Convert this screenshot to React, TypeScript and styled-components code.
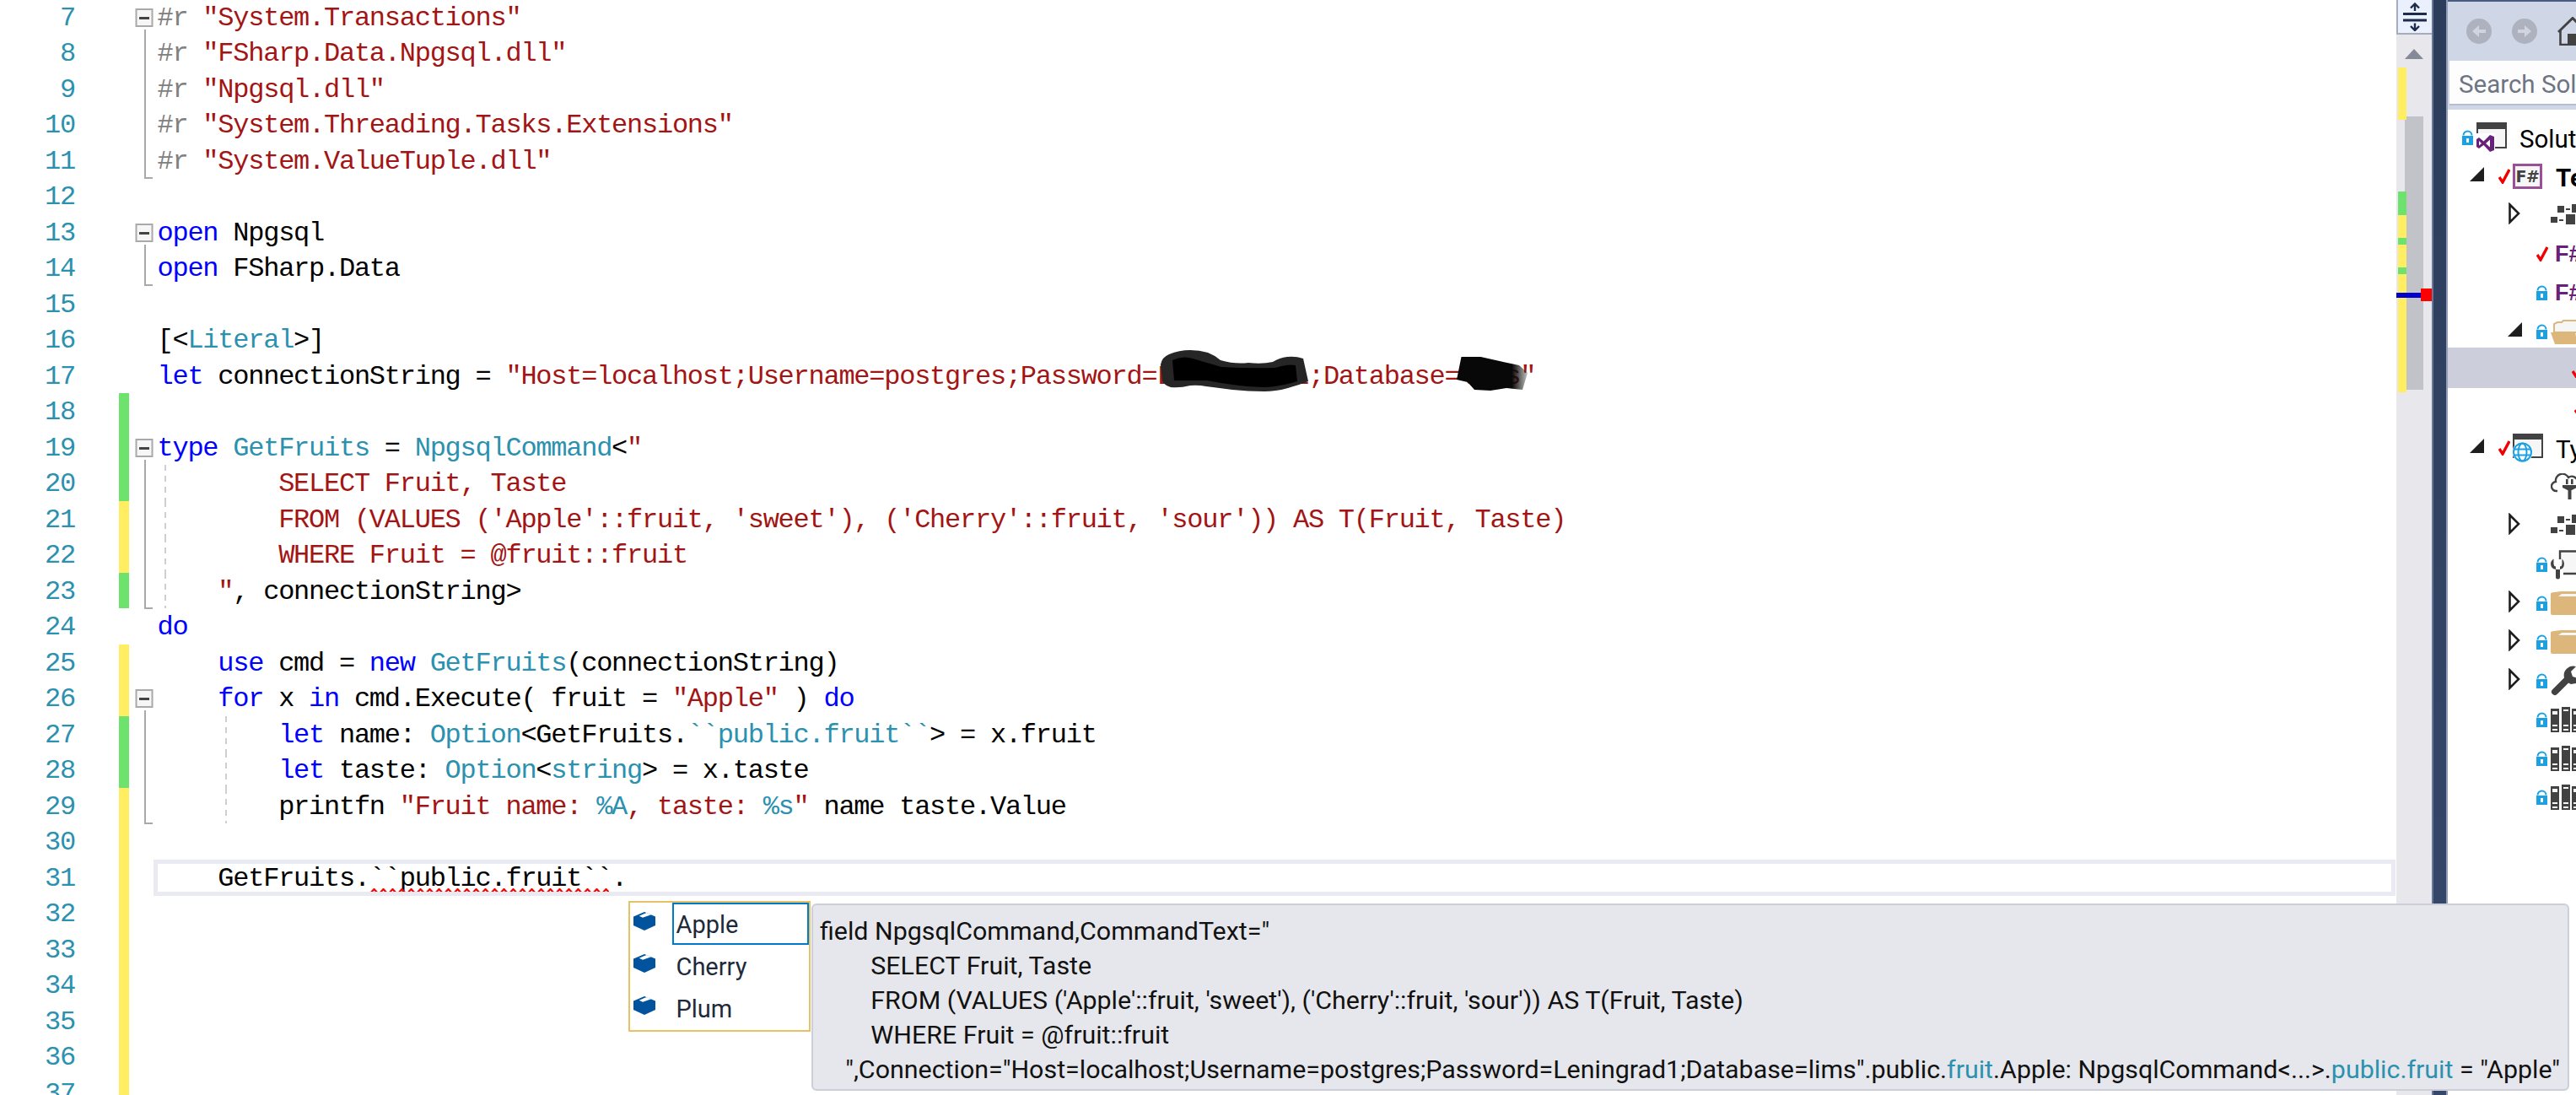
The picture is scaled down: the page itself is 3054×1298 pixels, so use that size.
import React from 'react';
import styled, { createGlobalStyle } from 'styled-components';

const GlobalStyle = createGlobalStyle`
  html, body {
    margin: 0;
    padding: 0;
    background: #fff;
  }
`;

const UI_FONT = `Roboto, "Noto Sans", sans-serif`;
const CODE_FONT = `"Liberation Mono", monospace`;

const Screen = styled.div`
  width: 3054px;
  height: 1298px;
  display: flex;
  overflow: hidden;
  position: relative;
  background: #fff;
`;

const Editor = styled.div`
  width: 2841px;
  flex-shrink: 0;
  position: relative;
  overflow: hidden;
`;

const Lines = styled.div`
  margin-top: -1.25px;
`;

const Row = styled.div<{ $current?: boolean }>`
  height: 42.5px;
  display: flex;
  position: relative;
  font: 32px/46px ${CODE_FONT};
  letter-spacing: -1.25px;
  white-space: pre;

  ${p => p.$current && `
    &::after {
      content: '';
      position: absolute;
      left: 182px;
      top: 0;
      width: 2658px;
      height: 43px;
      box-sizing: border-box;
      border: 5px solid #eaeaf2;
      pointer-events: none;
    }
  `}
`;

const LineNumber = styled.div`
  width: 89px;
  margin-right: 52px;
  text-align: right;
  color: #2b91af;
`;

const ChangeBar = styled.div<{ $kind?: 'g' | 'y' }>`
  width: 12px;
  flex-shrink: 0;
  background: ${p => (p.$kind === 'g' ? '#6de26c' : p.$kind === 'y' ? '#ffee62' : 'transparent')};
`;

const FoldCell = styled.div`
  width: 33.5px;
  flex-shrink: 0;
  height: 42.5px;

  svg {
    display: block;
    overflow: visible;
  }
`;

const Code = styled.div<{ $guide?: number }>`
  position: relative;
  flex: 1;

  ${p => p.$guide !== undefined && `
    &::before {
      content: '';
      position: absolute;
      left: ${p.$guide + 1.5}px;
      top: 0;
      bottom: 0;
      width: 2px;
      background: repeating-linear-gradient(#cfcfcf 0 7px, transparent 7px 13px);
    }
  `}
`;

const tokenColors: Record<string, string> = {
  k: '#0000ff',
  s: '#a31515',
  t: '#2b91af',
  p: '#808080',
  x: '#000000',
};

const Token = styled.span<{ $kind: string }>`
  color: ${p => tokenColors[p.$kind]};
`;

const Squiggle = styled.span`
  position: relative;

  svg {
    position: absolute;
    left: 0;
    bottom: -1.5px;
    width: 284px;
    height: 8px;
  }
`;

const Scribble = styled.svg<{ $left: number; $top: number }>`
  position: absolute;
  left: ${p => p.$left}px;
  top: ${p => p.$top}px;
  overflow: visible;
`;

const CompletionList = styled.div`
  position: absolute;
  left: 745px;
  top: 1068px;
  width: 216px;
  height: 155px;
  box-sizing: border-box;
  border: 2.5px solid #e5c365;
  background: #fff;
  font: 29px ${UI_FONT};
  color: #1e2a3a;
`;

const CompletionItem = styled.div`
  height: 50px;
  display: flex;
  align-items: center;
  padding-left: 3.5px;

  svg {
    flex-shrink: 0;
    margin: -6px 20px 0 0;
  }
`;

const CompletionLabel = styled.div<{ $active?: boolean }>`
  flex: 1;
  height: 100%;
  box-sizing: border-box;
  border: 2px solid ${p => (p.$active ? '#007acc' : 'transparent')};
  padding-left: 3px;
  line-height: 48px;
`;

const QuickInfo = styled.div`
  position: absolute;
  left: 962px;
  top: 1071px;
  width: 2084px;
  height: 222px;
  box-sizing: border-box;
  padding: 10px 0 0 8px;
  background: #e6e7ec;
  border: 2px solid #cccedb;
  border-radius: 6px;
  font: 30.4px/41px ${UI_FONT};
  color: #111;
  white-space: pre;
`;

const QuickType = styled.span`
  color: #2b91af;
`;

const ScrollBar = styled.div`
  width: 42px;
  flex-shrink: 0;
  background: #e8e8ec;
  position: relative;
`;

const SplitButton = styled.div`
  height: 41px;
  box-sizing: border-box;
  background: #eaf0fd;
  border-left: 2px solid #a4adbd;
  border-bottom: 2px solid #a4adbd;
  display: flex;
  align-items: center;
  justify-content: center;
`;

const ScrollArrow = styled.div`
  width: 0;
  height: 0;
  margin: 17px 0 0 10px;
  border-left: 11px solid transparent;
  border-right: 11px solid transparent;
  border-bottom: 12px solid #868999;
`;

const Thumb = styled.div`
  position: absolute;
  left: 10px;
  top: 138px;
  width: 22px;
  height: 324px;
  background: #c2c3c9;
`;

const OverviewMark = styled.div<{ $kind: 'g' | 'y'; $top: number; $height: number }>`
  position: absolute;
  left: 2px;
  width: 10px;
  top: ${p => p.$top}px;
  height: ${p => p.$height}px;
  background: ${p => (p.$kind === 'g' ? '#6de26c' : '#ffee62')};
`;

const CaretLine = styled.div`
  position: absolute;
  left: 0;
  top: 347px;
  width: 30px;
  height: 6px;
  background: #0000cd;
`;

const ErrorMark = styled.div`
  position: absolute;
  left: 29px;
  top: 342px;
  width: 13px;
  height: 15px;
  background: #ff0000;
`;

const Splitter = styled.div`
  width: 19px;
  flex-shrink: 0;
  box-sizing: border-box;
  background: linear-gradient(#2c3c5b, #36496b);
  border-left: 2px solid #67779a;
  border-right: 2px solid #919cb8;
`;

const SolutionPanel = styled.div`
  flex: 1;
  min-width: 0;
  overflow: hidden;
  display: flex;
  flex-direction: column;
  font-family: ${UI_FONT};
`;

const PanelHeader = styled.div`
  height: 130px;
  box-sizing: border-box;
  background: #cfd6e5;
  border-top: 2px solid #4a5b80;
  flex-shrink: 0;
`;

const ToolRow = styled.div`
  height: 70px;
  display: flex;
  align-items: center;
  gap: 24px;
  padding-left: 22px;

  svg {
    flex-shrink: 0;
  }
`;

const SearchBox = styled.div`
  height: 53px;
  box-sizing: border-box;
  margin-left: 2px;
  padding-left: 11px;
  background: #fdfdfd;
  border-bottom: 2px solid #b6bed1;
  font-size: 29.5px;
  line-height: 56px;
  color: #6d7484;
  white-space: nowrap;
`;

const Tree = styled.div`
  padding-top: 10px;
`;

const TreeRow = styled.div<{ $selected?: boolean }>`
  height: ${p => (p.$selected ? 48 : 46)}px;
  box-sizing: border-box;
  display: flex;
  align-items: center;
  white-space: nowrap;
  ${p => p.$selected && `
    margin: -4px 0 2px;
    padding-top: 6px;
    background: #cccedb;
  `}
`;

const Indent = styled.div<{ $level: number }>`
  width: ${p => 15 + p.$level * 45}px;
  flex-shrink: 0;
  display: flex;
  justify-content: flex-end;
  padding-right: 17px;
  box-sizing: border-box;
  margin-top: -5px;
`;

const StateSlot = styled.div`
  width: 17px;
  flex-shrink: 0;
  display: flex;

  svg {
    display: block;
  }
`;

const IconSlot = styled.div`
  width: 51px;
  flex-shrink: 0;
  display: flex;

  svg {
    display: block;
    flex-shrink: 0;
  }
`;

const FsBox = styled.div`
  width: 35px;
  height: 30px;
  box-sizing: border-box;
  border: 3px solid #9b4f96;
  background: #f6f6f6;
  font: bold 19px/24px "DejaVu Sans", sans-serif;
  color: #424242;
  text-align: center;
  letter-spacing: -0.5px;
`;

const FsFile = styled.div`
  padding-left: 5px;
  font: bold 27px/30px "Liberation Sans", sans-serif;
  color: #68217a;
`;

const NodeLabel = styled.div<{ $bold?: boolean }>`
  margin-top: 3px;
  font-size: 29.5px;
  font-weight: ${p => (p.$bold ? 700 : 400)};
  color: #000;
`;

type Tok = [string, string];
interface Line {
  n: number;
  change?: 'g' | 'y';
  fold?: 'open' | 'line' | 'end';
  guide?: number;
  tokens?: Tok[];
}

const codeLines: Line[] = [
  { n: 7, fold: 'open', tokens: [['p', '#r '], ['s', '"System.Transactions"']] },
  { n: 8, fold: 'line', tokens: [['p', '#r '], ['s', '"FSharp.Data.Npgsql.dll"']] },
  { n: 9, fold: 'line', tokens: [['p', '#r '], ['s', '"Npgsql.dll"']] },
  { n: 10, fold: 'line', tokens: [['p', '#r '], ['s', '"System.Threading.Tasks.Extensions"']] },
  { n: 11, fold: 'end', tokens: [['p', '#r '], ['s', '"System.ValueTuple.dll"']] },
  { n: 12 },
  { n: 13, fold: 'open', tokens: [['k', 'open'], ['x', ' Npgsql']] },
  { n: 14, fold: 'end', tokens: [['k', 'open'], ['x', ' FSharp.Data']] },
  { n: 15 },
  { n: 16, tokens: [['x', '[<'], ['t', 'Literal'], ['x', '>]']] },
  { n: 17, tokens: [['k', 'let'], ['x', ' connectionString = '], ['s', '"Host=localhost;Username=postgres;Password=Leningrad1;Database=lims"']] },
  { n: 18, change: 'g' },
  { n: 19, change: 'g', fold: 'open', tokens: [['k', 'type'], ['x', ' '], ['t', 'GetFruits'], ['x', ' = '], ['t', 'NpgsqlCommand'], ['x', '<'], ['s', '"']] },
  { n: 20, change: 'g', fold: 'line', guide: 7, tokens: [['s', '        SELECT Fruit, Taste']] },
  { n: 21, change: 'y', fold: 'line', guide: 7, tokens: [['s', `        FROM (VALUES ('Apple'::fruit, 'sweet'), ('Cherry'::fruit, 'sour')) AS T(Fruit, Taste)`]] },
  { n: 22, change: 'y', fold: 'line', guide: 7, tokens: [['s', '        WHERE Fruit = @fruit::fruit']] },
  { n: 23, change: 'g', fold: 'end', guide: 7, tokens: [['s', '    "'], ['x', ', connectionString>']] },
  { n: 24, tokens: [['k', 'do']] },
  { n: 25, change: 'y', tokens: [['x', '    '], ['k', 'use'], ['x', ' cmd = '], ['k', 'new'], ['x', ' '], ['t', 'GetFruits'], ['x', '(connectionString)']] },
  { n: 26, change: 'y', fold: 'open', tokens: [['x', '    '], ['k', 'for'], ['x', ' x '], ['k', 'in'], ['x', ' cmd.Execute( fruit = '], ['s', '"Apple"'], ['x', ' ) '], ['k', 'do']] },
  { n: 27, change: 'g', fold: 'line', guide: 79, tokens: [['x', '        '], ['k', 'let'], ['x', ' name: '], ['t', 'Option'], ['x', '<GetFruits.'], ['t', '``public.fruit``'], ['x', '> = x.fruit']] },
  { n: 28, change: 'g', fold: 'line', guide: 79, tokens: [['x', '        '], ['k', 'let'], ['x', ' taste: '], ['t', 'Option'], ['x', '<'], ['t', 'string'], ['x', '> = x.taste']] },
  { n: 29, change: 'y', fold: 'end', guide: 79, tokens: [['x', '        printfn '], ['s', '"Fruit name: '], ['t', '%A'], ['s', ', taste: '], ['t', '%s'], ['s', '"'], ['x', ' name taste.Value']] },
  { n: 30, change: 'y' },
  { n: 31, change: 'y' },
  { n: 32, change: 'y' },
  { n: 33, change: 'y' },
  { n: 34, change: 'y' },
  { n: 35, change: 'y' },
  { n: 36, change: 'y' },
  { n: 37, change: 'y' },
];

const overviewMarks: { kind: 'g' | 'y'; top: number; height: number }[] = [
  { kind: 'y', top: 80, height: 62 },
  { kind: 'g', top: 227, height: 28 },
  { kind: 'y', top: 255, height: 27 },
  { kind: 'g', top: 282, height: 8 },
  { kind: 'y', top: 290, height: 27 },
  { kind: 'g', top: 317, height: 8 },
  { kind: 'y', top: 325, height: 140 },
];

const FoldGlyph = ({ kind }: { kind: 'open' | 'line' | 'end' }) => (
  <svg width="35" height="43" viewBox="0 0 35 43">
    {kind === 'open' && (
      <>
        <rect x="8.5" y="12" width="19" height="20" fill="#f6f6f6" stroke="#a9a9a9" strokeWidth="2" />
        <rect x="12" y="21" width="12" height="3" fill="#444" />
        <path d="M19 36V43" stroke="#a9a9a9" strokeWidth="2" fill="none" />
      </>
    )}
    {kind === 'line' && <path d="M19 0V43" stroke="#a9a9a9" strokeWidth="2" fill="none" />}
    {kind === 'end' && <path d="M19 0V42H28" stroke="#a9a9a9" strokeWidth="2" fill="none" />}
  </svg>
);

const CubeIcon = () => (
  <svg width="26" height="22" viewBox="0 0 26 22">
    <polygon points="13,0 26,5.5 26,16 13,22 0,16 0,5.5" fill="#00539c" />
    <polygon points="11,6.7 21,3.3 15.6,0.9 6.7,4.7" fill="#fff" />
  </svg>
);

const Lock = () => (
  <svg width="13" height="18" viewBox="0 0 13 18">
    <path d="M1.5 6.5A5 5 0 0 1 11.5 6.5" fill="none" stroke="#1ba1e2" strokeWidth="2" />
    <path d="M0 7H13V18H0Z M5 10V15H8V10Z" fill="#1ba1e2" fillRule="evenodd" />
  </svg>
);

const Check = () => (
  <svg width="14" height="18" viewBox="0 0 14 18">
    <path d="M1 10L5 16L13 1" fill="none" stroke="#f00000" strokeWidth="3.4" />
  </svg>
);

const SolidArrow = () => (
  <svg width="17" height="17" viewBox="0 0 17 17">
    <polygon points="17,0 17,17 0,17" fill="#1e1e1e" />
  </svg>
);

const HollowArrow = () => (
  <svg width="14" height="26" viewBox="0 0 14 26" style={{ marginRight: 2 }}>
    <path d="M1.5 2.5L12 13L1.5 23.5Z" fill="#fff" stroke="#1e1e1e" strokeWidth="2.6" />
  </svg>
);

const CircleButton = ({ flip }: { flip?: boolean }) => (
  <svg width="30" height="30" viewBox="0 0 30 30">
    <circle cx="15" cy="15" r="15" fill="#adb2be" />
    <path
      d={flip ? 'M7 13H15V8L23 15L15 22V17H7Z' : 'M23 13H15V8L7 15L15 22V17H23Z'}
      fill="#cfd4e0"
    />
  </svg>
);

const HomeIcon = () => (
  <svg width="36" height="34" viewBox="0 0 36 34">
    <path d="M1 18L18 1.5L35 18" fill="none" stroke="#424242" strokeWidth="3" />
    <path d="M3.5 16V33H34V16" fill="none" stroke="#424242" strokeWidth="2.6" />
    <rect x="12" y="20" width="11" height="13" fill="#424242" />
  </svg>
);

const SolutionIcon = () => (
  <svg width="36" height="36" viewBox="0 0 36 36">
    <rect x="1" y="1" width="34" height="29" fill="#f6f6f6" stroke="#424242" strokeWidth="2" />
    <rect x="0" y="0" width="36" height="8" fill="#424242" />
    <rect x="-1" y="13" width="23" height="22" fill="#fff" />
    <path
      d="M0 20L3 18L8.5 22.5L16 15L21 17V33L16 35L8.5 27L3 31L0 29Z M3 22V27.5L6 25ZM16 20.5L11 25L16 29.5Z"
      fill="#68217a"
      fillRule="evenodd"
    />
  </svg>
);

const WebIcon = () => (
  <svg width="36" height="34" viewBox="0 0 36 34">
    <rect x="1" y="1" width="34" height="27" fill="#f6f6f6" stroke="#424242" strokeWidth="2" />
    <rect x="0" y="0" width="36" height="7" fill="#424242" />
    <circle cx="11.5" cy="22" r="12" fill="#fff" />
    <g fill="none" stroke="#1ba1e2" strokeWidth="2">
      <circle cx="11.5" cy="22" r="10.5" />
      <ellipse cx="11.5" cy="22" rx="5" ry="10.5" />
      <path d="M1.5 18.5H21.5M1.5 25.5H21.5" />
    </g>
  </svg>
);

const ReferencesIcon = () => (
  <svg width="36" height="26" viewBox="0 0 36 26" fill="#424242">
    <rect x="8" y="2" width="8" height="8" />
    <rect x="18" y="5" width="5" height="2" />
    <rect x="25" y="0" width="10" height="10" />
    <rect x="0" y="15" width="8" height="7" />
    <rect x="10" y="18" width="5" height="2" />
    <rect x="18" y="12" width="11" height="12" />
  </svg>
);

const CloudPlugIcon = () => (
  <svg width="36" height="32" viewBox="0 0 36 32">
    <path
      d="M8 21H7A5.5 5.5 0 0 1 6 10A8 8 0 0 1 21 5A7 7 0 0 1 32 11"
      fill="none"
      stroke="#424242"
      strokeWidth="2.4"
    />
    <g fill="#424242">
      <rect x="18" y="7" width="2.6" height="6" />
      <rect x="24" y="7" width="2.6" height="6" />
      <path d="M14 14H31V17L25 20H20L14 17Z" />
      <rect x="20.5" y="19" width="4" height="12" />
    </g>
  </svg>
);

const WrenchDocIcon = () => (
  <svg width="36" height="37" viewBox="0 0 36 37">
    <path d="M11 12V2.5H34V29H15" fill="#f6f6f6" stroke="#424242" strokeWidth="2.4" />
    <path
      d="M3.5 11.5V17.5Q3.5 20 6 20.5V33A2.5 2.5 0 0 0 11 33V20.5Q13.5 20 13.5 17.5V11.5Q16 14 16 17Q16 23 11 24V24H6V24Q0 23 0 17Q0 14 3.5 11.5Z"
      fill="#424242"
    />
  </svg>
);

const FolderIcon = () => (
  <svg width="40" height="28" viewBox="0 0 40 28">
    <path d="M0 8L0 3Q0 2 1 1.5L12 0H40V28H2Q0 28 0 26Z" fill="#dcb67a" />
    <path d="M13 3H40V6H9Z" fill="#f6f6f6" />
  </svg>
);

const OpenFolderIcon = () => (
  <svg width="40" height="29" viewBox="0 0 40 29">
    <path d="M4 15V5L8 3H13L15 1H40V15Z" fill="#f6f6f6" stroke="#dcb67a" strokeWidth="2" />
    <path d="M0 15H29L32 29H5Z" fill="#dcb67a" />
  </svg>
);

const WrenchIcon = () => (
  <svg width="36" height="36" viewBox="0 0 36 36">
    <path d="M5 31L19 17" stroke="#424242" strokeWidth="8" strokeLinecap="round" />
    <path d="M16 14A11 11 0 0 1 30 1L24 7L26 13L32 15L36 10V20L24 22L20 20Z" fill="#424242" />
  </svg>
);

const LibraryIcon = () => (
  <svg width="36" height="30" viewBox="0 0 36 30">
    {[
      { x: 0, y: 2, h: 28 },
      { x: 13, y: 0, h: 30 },
      { x: 25, y: 2, h: 28 },
    ].map(b => (
      <g key={b.x}>
        <rect x={b.x} y={b.y} width="10" height={b.h} fill="#424242" />
        <rect x={b.x + 2} y={b.y + 3} width="6" height={b.x === 13 ? 2 : 4} fill="#f6f6f6" />
        <rect x={b.x + 2} y={b.y + b.h - 9} width="6" height="2" fill="#f6f6f6" />
        <rect x={b.x + 2} y={b.y + b.h - 4} width="6" height="2" fill="#f6f6f6" />
      </g>
    ))}
  </svg>
);

interface TreeNode {
  level: number;
  arrow?: 'solid' | 'hollow';
  state?: 'lock' | 'check';
  icon?: React.ReactNode;
  label?: string;
  bold?: boolean;
  selected?: boolean;
}

const treeNodes: TreeNode[] = [
  { level: 0, state: 'lock', icon: <SolutionIcon />, label: 'Solution' },
  { level: 1, arrow: 'solid', state: 'check', icon: <FsBox>F#</FsBox>, label: 'Test', bold: true },
  { level: 2, arrow: 'hollow', icon: <ReferencesIcon /> },
  { level: 2, state: 'check', icon: <FsFile>F#</FsFile> },
  { level: 2, state: 'lock', icon: <FsFile>F#</FsFile> },
  { level: 2, arrow: 'solid', state: 'lock', icon: <OpenFolderIcon /> },
  { level: 2.93, state: 'check', selected: true },
  { level: 3, state: 'check' },
  { level: 1, arrow: 'solid', state: 'check', icon: <WebIcon />, label: 'Ty' },
  { level: 2, icon: <CloudPlugIcon /> },
  { level: 2, arrow: 'hollow', icon: <ReferencesIcon /> },
  { level: 2, state: 'lock', icon: <WrenchDocIcon /> },
  { level: 2, arrow: 'hollow', state: 'lock', icon: <FolderIcon /> },
  { level: 2, arrow: 'hollow', state: 'lock', icon: <FolderIcon /> },
  { level: 2, arrow: 'hollow', state: 'lock', icon: <WrenchIcon /> },
  { level: 2, state: 'lock', icon: <LibraryIcon /> },
  { level: 2, state: 'lock', icon: <LibraryIcon /> },
  { level: 2, state: 'lock', icon: <LibraryIcon /> },
];

const App = () => (
  <Screen>
    <GlobalStyle />
    <Editor>
      <Lines>
        {codeLines.map(line => (
          <Row key={line.n} $current={line.n === 31}>
            <LineNumber>{line.n}</LineNumber>
            <ChangeBar $kind={line.change} />
            <FoldCell>{line.fold && <FoldGlyph kind={line.fold} />}</FoldCell>
            <Code $guide={line.guide}>
              {line.n === 31 ? (
                <>
                  <Token $kind="x">{'    GetFruits.'}</Token>
                  <Squiggle>
                    <Token $kind="x">``public.fruit``</Token>
                    <svg viewBox="0 0 284 8" preserveAspectRatio="none">
                      <defs>
                        <pattern id="wave" width="11" height="8" patternUnits="userSpaceOnUse">
                          <path d="M0 7L5.5 1L11 7" fill="none" stroke="#ff0000" strokeWidth="2.2" />
                        </pattern>
                      </defs>
                      <rect width="284" height="8" fill="url(#wave)" />
                    </svg>
                  </Squiggle>
                  <Token $kind="x">.</Token>
                </>
              ) : (
                line.tokens?.map((t, i) => (
                  <Token key={i} $kind={t[0]}>
                    {t[1]}
                  </Token>
                ))
              )}
            </Code>
          </Row>
        ))}
      </Lines>

      <Scribble $left={1376} $top={415} width="175" height="49" viewBox="0 0 175 49">
        <path
          d="M0 17Q2 8 10 5Q22 0 35 0Q46 0 56 3Q64 6 71 12Q88 17 104 15Q120 17 133 14Q141 9 150 8Q160 7 169 10L175 37Q165 41 154 44Q138 49 123 49Q104 49 85 47Q70 45 54 43Q44 41 35 42Q23 45 12 44Q5 42 2 37Z"
          fill="#262626"
        />
        <path
          d="M14 12Q26 6 38 10L72 20Q104 22 136 21Q150 16 160 18L162 37Q140 44 122 44Q90 43 55 36Q35 36 16 36Z"
          fill="#000"
        />
      </Scribble>
      <Scribble $left={1726} $top={422} width="86" height="42" viewBox="0 0 86 42">
        <defs>
          <linearGradient id="fade" x1="0" x2="1" y1="0" y2="0">
            <stop offset="0.78" stopColor="#080808" />
            <stop offset="1" stopColor="#080808" stopOpacity="0.25" />
          </linearGradient>
        </defs>
        <path
          d="M6.5 1L29.5 1L56 7L75 11L85 20L79 40L60 38L41 41L22 40L14 31L1 28Z"
          fill="url(#fade)"
        />
      </Scribble>

      <CompletionList>
        {['Apple', 'Cherry', 'Plum'].map((name, i) => (
          <CompletionItem key={name}>
            <CubeIcon />
            <CompletionLabel $active={i === 0}>{name}</CompletionLabel>
          </CompletionItem>
        ))}
      </CompletionList>
    </Editor>

    <ScrollBar>
      <SplitButton>
        <svg width="30" height="34" viewBox="0 0 30 34" fill="none" stroke="#1c2c48" strokeWidth="2.4">
          <path d="M1 13.5H29M1 21H29" strokeWidth="3" />
          <path d="M15 2V10M10 6.5L15 1.5L20 6.5" />
          <path d="M15 24.5V32M10 28L15 33L20 28" />
        </svg>
      </SplitButton>
      <ScrollArrow />
      <Thumb />
      {overviewMarks.map(m => (
        <OverviewMark key={m.top} $kind={m.kind} $top={m.top} $height={m.height} />
      ))}
      <CaretLine />
      <ErrorMark />
    </ScrollBar>

    <Splitter />

    <SolutionPanel>
      <PanelHeader>
        <ToolRow>
          <CircleButton />
          <CircleButton flip />
          <HomeIcon />
        </ToolRow>
        <SearchBox>Search Solution Explorer</SearchBox>
      </PanelHeader>
      <Tree>
        {treeNodes.map((node, i) => (
          <TreeRow key={i} $selected={node.selected}>
            <Indent $level={node.level}>
              {node.arrow === 'solid' && <SolidArrow />}
              {node.arrow === 'hollow' && <HollowArrow />}
            </Indent>
            <StateSlot>
              {node.state === 'lock' && <Lock />}
              {node.state === 'check' && <Check />}
            </StateSlot>
            {node.icon && <IconSlot>{node.icon}</IconSlot>}
            {node.label && <NodeLabel $bold={node.bold}>{node.label}</NodeLabel>}
          </TreeRow>
        ))}
      </Tree>
    </SolutionPanel>

    <QuickInfo>
      {'field NpgsqlCommand,CommandText="\n'}
      {'        SELECT Fruit, Taste\n'}
      {`        FROM (VALUES ('Apple'::fruit, 'sweet'), ('Cherry'::fruit, 'sour')) AS T(Fruit, Taste)\n`}
      {'        WHERE Fruit = @fruit::fruit\n'}
      {'    ",Connection="Host=localhost;Username=postgres;Password=Leningrad1;Database=lims".public.'}
      <QuickType>fruit</QuickType>
      {'.Apple: NpgsqlCommand<...>.'}
      <QuickType>public.fruit</QuickType>
      {' = "Apple"'}
    </QuickInfo>
  </Screen>
);

export default App;
